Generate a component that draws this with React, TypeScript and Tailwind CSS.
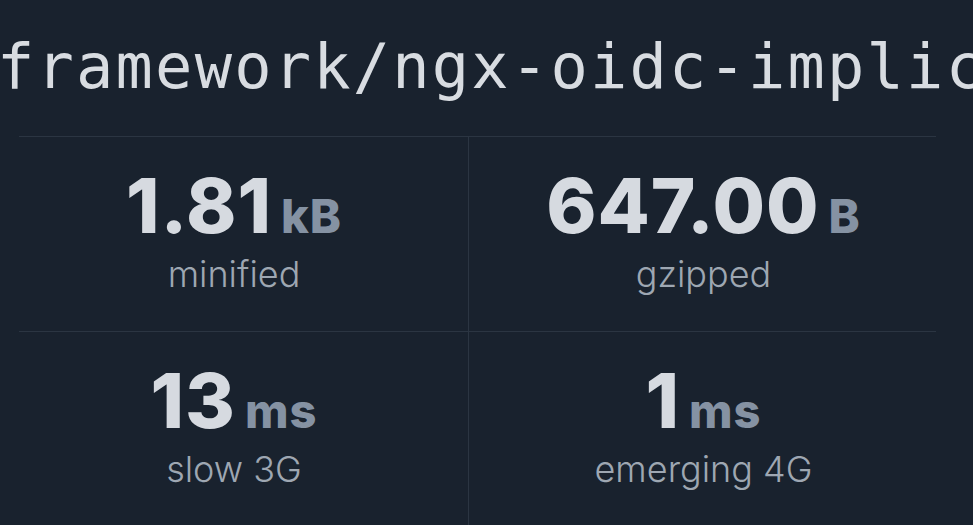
import React from "react";

const stats = [
  [
    { value: "1.81", unit: "kB", label: "minified" },
    { value: "647.00", unit: "B", label: "gzipped" },
  ],
  [
    { value: "13", unit: "ms", label: "slow 3G" },
    { value: "1", unit: "ms", label: "emerging 4G" },
  ],
];

function Cell({ value, unit, label, right }: { value: string; unit: string; label: string; right?: boolean }) {
  return (
    <div
      className={
        "flex flex-col items-center pt-[30px] pb-[39px] " +
        (right ? "" : "border-r border-[#2b3542]")
      }
    >
      <div className="flex items-baseline leading-none">
        <span className="text-[76px] font-extrabold leading-none text-[#d6dae0] tracking-[1px]">{value}</span>
        <span className="ml-[9px] text-[47px] font-extrabold leading-none text-[#8592a3] tracking-[1px]">{unit}</span>
      </div>
      <div className="mt-[13px] text-[36px] leading-none text-[#9ea7b2] font-light">{label}</div>
    </div>
  );
}

export default function App() {
  return (
    <div
      className="w-[973px] h-[525px] overflow-hidden bg-[#19222e]"
      style={{ fontFamily: "Inter, 'Noto Sans', sans-serif" }}
    >
      <div
        className="ml-[-3px] pt-[36px] text-[62px] leading-[62px] tracking-[2.2px] whitespace-nowrap text-[#d8dce1]"
        style={{ fontFamily: "'DejaVu Sans Mono', monospace" }}
      >
        framework/ngx-oidc-implicit
      </div>
      <div className="mt-[38px] w-[938px]">
        {stats.map((row, i) => (
          <div key={i}>
            <div className="ml-[19px] mr-[2px] h-px bg-[#2b3542]" />
            <div className="grid grid-cols-2">
              <Cell {...row[0]} />
              <Cell {...row[1]} right />
            </div>
          </div>
        ))}
      </div>
    </div>
  );
}
